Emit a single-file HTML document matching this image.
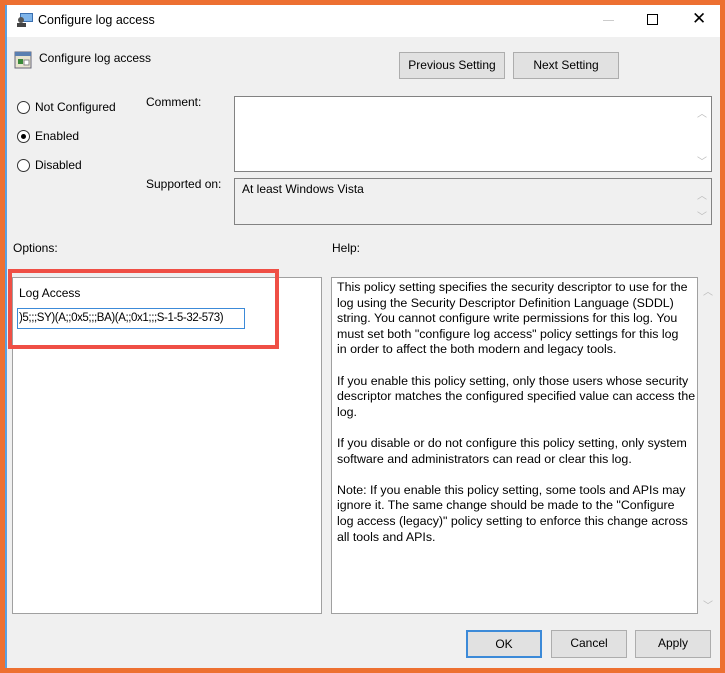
<!DOCTYPE html>
<html><head><meta charset="utf-8"><style>
*{margin:0;padding:0;box-sizing:border-box}
body{width:725px;height:673px;background:#ed7031;position:relative;overflow:hidden;font-family:"Liberation Sans",sans-serif;font-size:12px;color:#000}
.win{position:absolute;left:5px;top:5px;width:715px;height:663px;background:#f0f0f0;border-left:2px solid #5aa0e0}
.tb{position:absolute;left:0;top:0;width:713px;height:32px;background:#fff}
.a{position:absolute;white-space:nowrap}
.btn{position:absolute;background:#e1e1e1;border:1px solid #adadad;text-align:center;line-height:25px}
.box{position:absolute;background:#fff;border:1px solid #828282}
.rad{position:absolute;width:13px;height:13px;border:1px solid #333;border-radius:50%;background:#fff}
.sc{position:absolute;color:#bbb;font-size:10px}
</style></head><body>
<div class="win">
<div class="tb">
<svg class="a" style="left:9px;top:7px" width="18" height="16" viewBox="0 0 18 16"><rect x="4" y="1" width="13" height="9" fill="#3a6fb0"/><rect x="5" y="2" width="11" height="7" fill="#7fb5ea"/><circle cx="5" cy="8" r="3" fill="#555"/><rect x="1" y="11" width="9" height="4" fill="#444"/></svg>
<div class="a" style="left:31px;top:8px;font-size:12.5px">Configure log access</div>
<div class="a" style="left:596px;top:15px;width:11px;height:1px;background:#ccc"></div>
<div class="a" style="left:640px;top:9px;width:11px;height:11px;border:1px solid #000"></div>
<div class="a" style="left:685px;top:4px;font-size:17px">✕</div>
</div>
<svg class="a" style="left:7px;top:46px" width="18" height="18" viewBox="0 0 18 18"><rect x="1" y="1" width="16" height="16" fill="#e8e4d0" stroke="#667"/><rect x="1" y="1" width="16" height="4" fill="#5a7fb0"/><rect x="4" y="8" width="5" height="5" fill="#3a8a3a"/><rect x="10" y="9" width="5" height="5" fill="#fff" stroke="#888"/></svg>
<div class="a" style="left:32px;top:46px">Configure log access</div>
<div class="btn" style="left:392px;top:47px;width:106px;height:27px">Previous Setting</div>
<div class="btn" style="left:506px;top:47px;width:106px;height:27px">Next Setting</div>
<div class="rad" style="left:10px;top:96px"></div><div class="a" style="left:28px;top:95px">Not Configured</div>
<div class="rad" style="left:10px;top:125px"></div><div class="a" style="left:14px;top:129px;width:5px;height:5px;border-radius:50%;background:#000"></div><div class="a" style="left:28px;top:124px">Enabled</div>
<div class="rad" style="left:10px;top:154px"></div><div class="a" style="left:28px;top:153px">Disabled</div>
<div class="a" style="left:139px;top:90px">Comment:</div>
<div class="box" style="left:227px;top:91px;width:478px;height:76px"></div>
<div class="sc" style="left:690px;top:100px">︿</div><div class="sc" style="left:690px;top:148px">﹀</div>
<div class="a" style="left:139px;top:172px">Supported on:</div>
<div class="box" style="left:227px;top:173px;width:478px;height:47px;background:#f0f0f0"></div>
<div class="a" style="left:235px;top:177px">At least Windows Vista</div>
<div class="sc" style="left:690px;top:182px">︿</div><div class="sc" style="left:690px;top:203px">﹀</div>
<div class="a" style="left:6px;top:236px">Options:</div>
<div class="a" style="left:325px;top:236px">Help:</div>
<div class="box" style="left:5px;top:272px;width:310px;height:337px;border-color:#a0a0a0"></div>
<div class="box" style="left:324px;top:272px;width:367px;height:337px;border-color:#a0a0a0"></div>
<div class="sc" style="left:696px;top:278px">︿</div><div class="sc" style="left:696px;top:592px">﹀</div>
<div class="a" style="left:12px;top:281px">Log Access</div>
<div class="a" style="left:10px;top:303px;width:228px;height:21px;border:1px solid #3c8ad8;background:#fff;padding:3px 0 0 1px;overflow:hidden;font-size:11.5px;letter-spacing:-0.4px">)5;;;SY)(A;;0x5;;;BA)(A;;0x1;;;S-1-5-32-573)</div>
<div class="a" style="left:1px;top:264px;width:271px;height:80px;border:4px solid #ef4f45"></div>
<div class="a" style="left:330px;top:275px;line-height:15.6px;font-size:12.4px">This policy setting specifies the security descriptor to use for the<br>log using the Security Descriptor Definition Language (SDDL)<br>string. You cannot configure write permissions for this log. You<br>must set both "configure log access" policy settings for this log<br>in order to affect the both modern and legacy tools.<br><br>If you enable this policy setting, only those users whose security<br>descriptor matches the configured specified value can access the<br>log.<br><br>If you disable or do not configure this policy setting, only system<br>software and administrators can read or clear this log.<br><br>Note: If you enable this policy setting, some tools and APIs may<br>ignore it. The same change should be made to the "Configure<br>log access (legacy)" policy setting to enforce this change across<br>all tools and APIs.</div>
<div class="btn" style="left:459px;top:625px;width:76px;height:28px;border:2px solid #3c8ad8;line-height:24px">OK</div>
<div class="btn" style="left:544px;top:625px;width:76px;height:28px">Cancel</div>
<div class="btn" style="left:628px;top:625px;width:76px;height:28px">Apply</div>
</div>
</body></html>
